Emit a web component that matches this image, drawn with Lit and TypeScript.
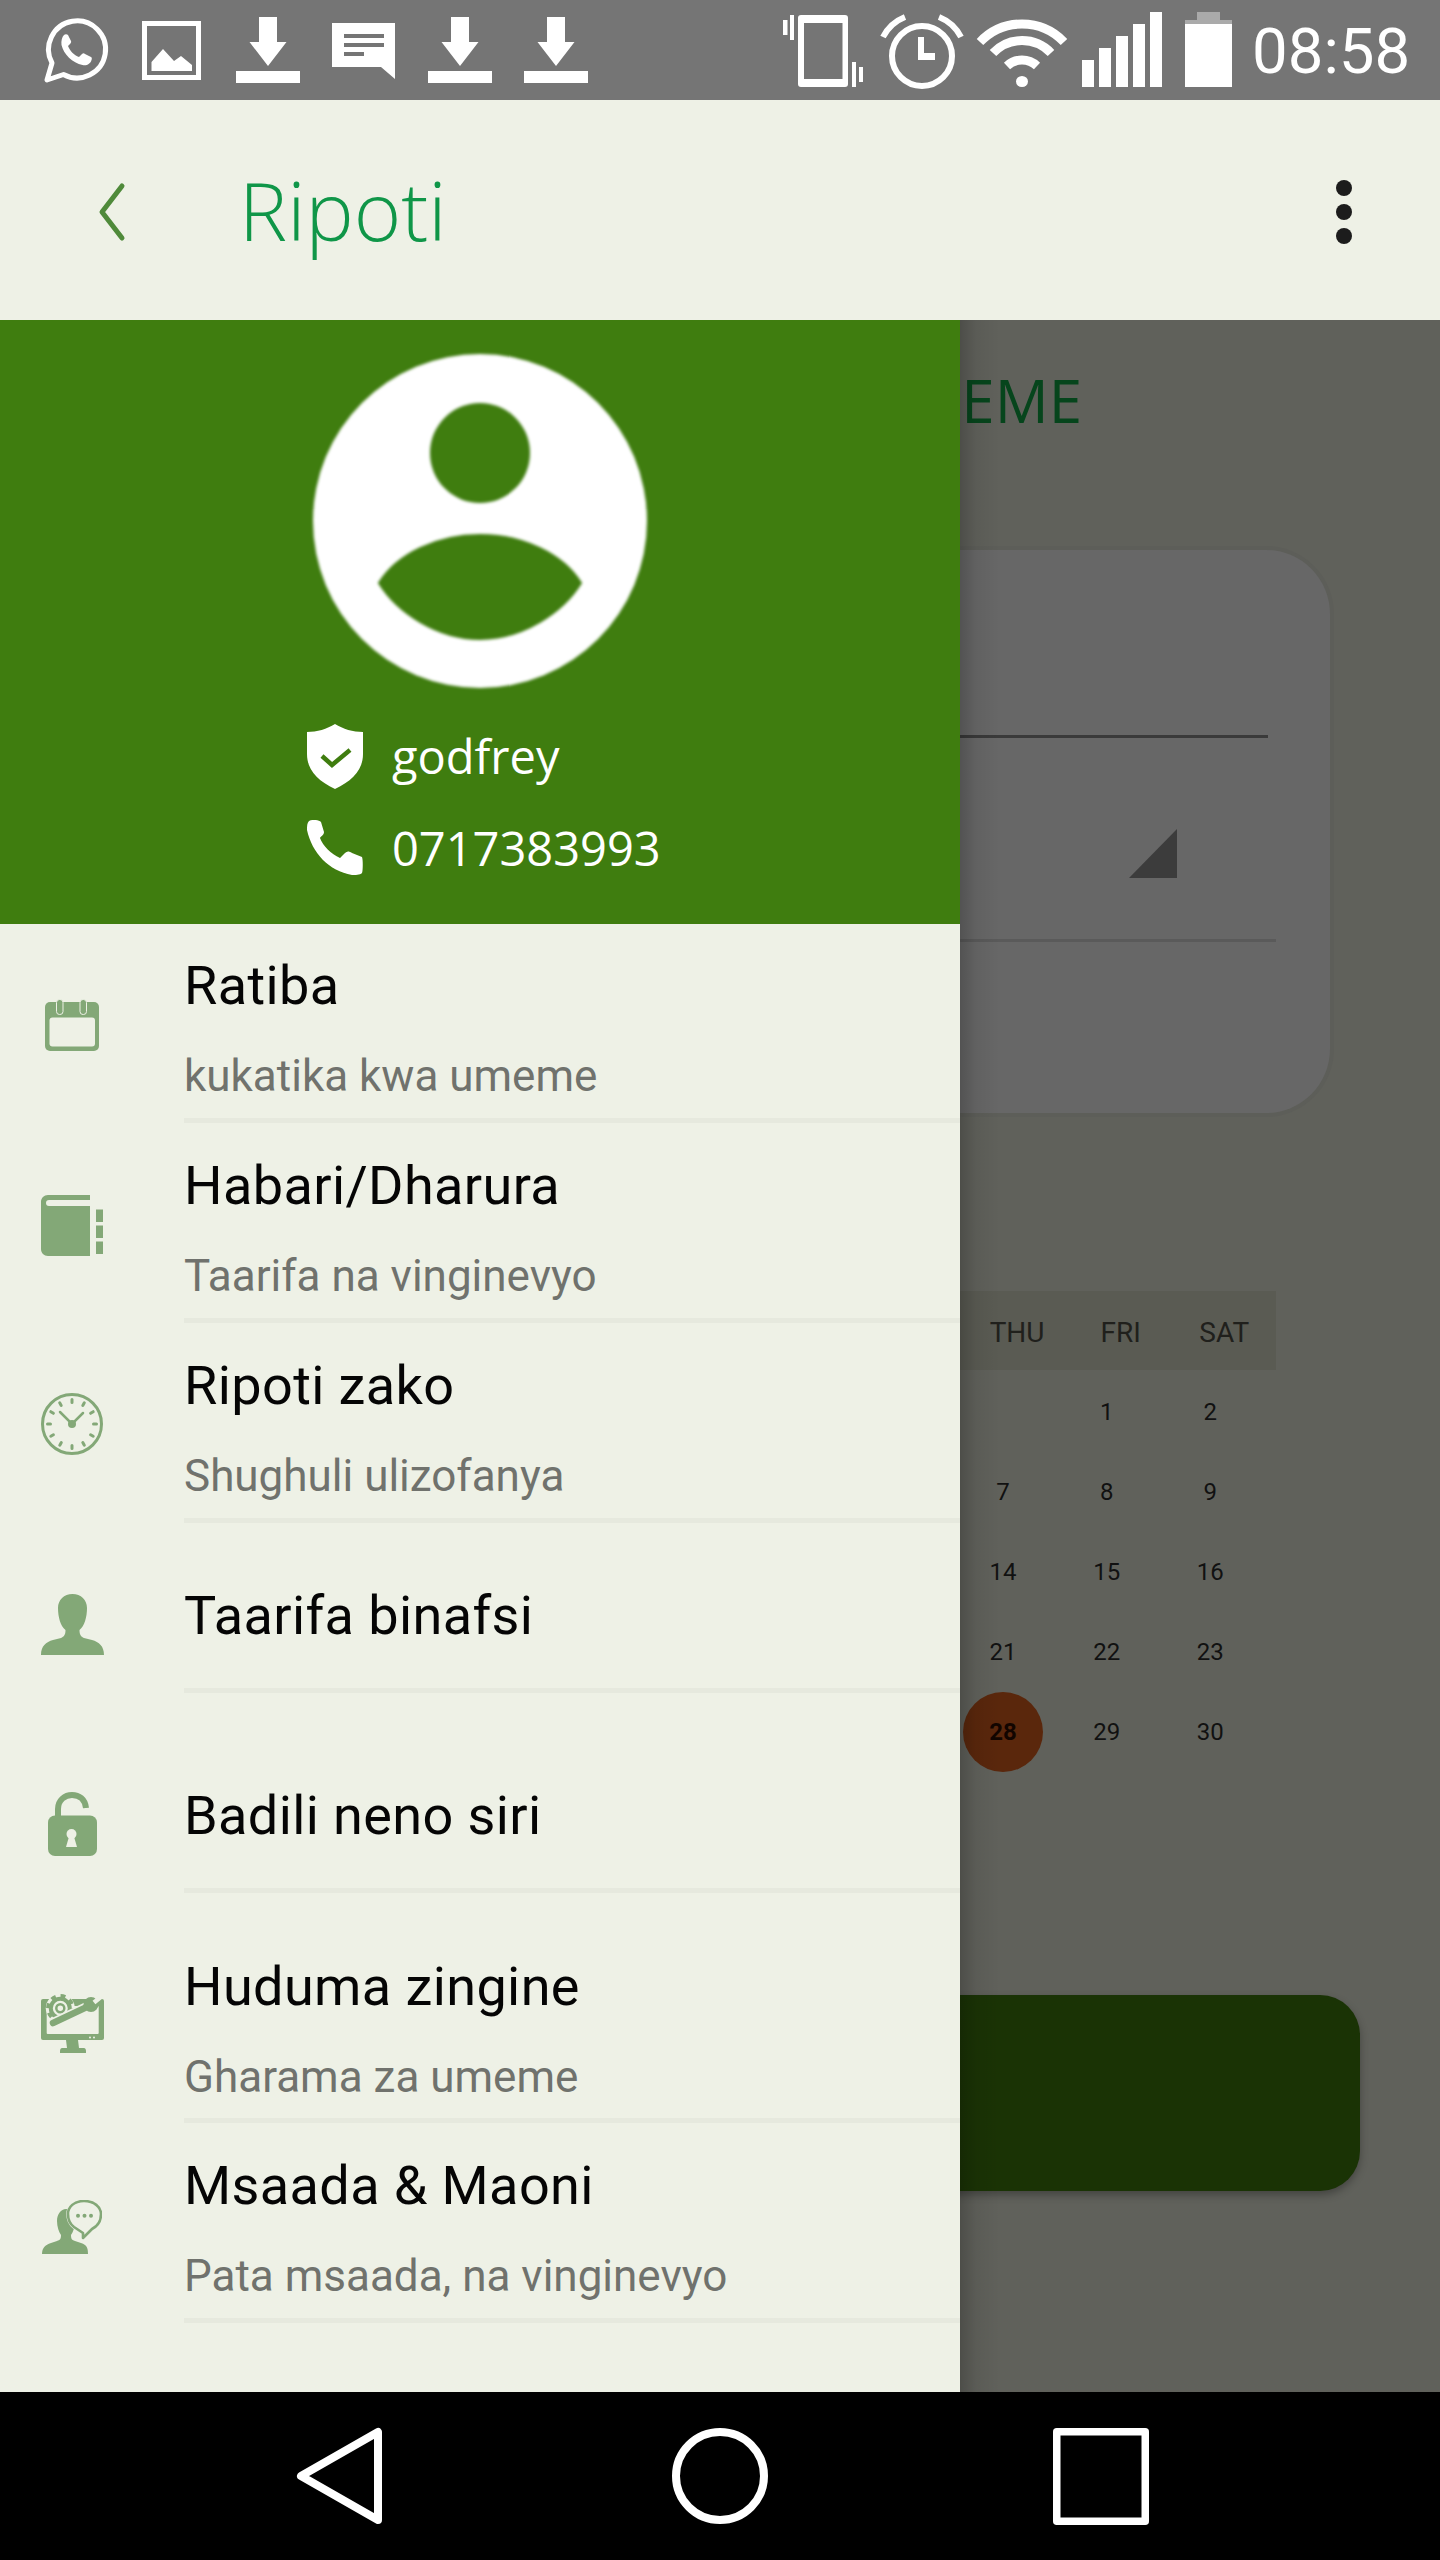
import { LitElement, css, html } from "lit";
import { customElement } from "lit/decorators.js";

const BG = "#eef1e6";

const download = html`<svg width="96" height="100" viewBox="-8 0 96 100" fill="#fff">
  <path d="M31 17h18v25h9.500L40 66 21.500 42H31z" /><rect x="8" y="71" width="64" height="12" />
</svg>`;

const statusLeft = [
  html`<svg width="96" height="100" viewBox="-16 -18 96 100">
    <path d="M3 62 8 45A28.500 28.500 0 1 1 19.500 56.500Z" fill="none" stroke="#fff" stroke-width="5" stroke-linejoin="round" />
    <path fill="#fff" d="M20 17c1-1 3-1 4 0l3 6c.4 1 0 2-1 3l-2 2c2 5 6 9 11 11l3-3c1-1 2-1 3 0l6 3c1 .5 1 2 .5 3-1 4-5 6-9 5-10-2-19-11-21-20-.5-4 .5-8 2.500-10z" />
  </svg>`,
  html`<svg width="96" height="100" viewBox="124 0 96 100" fill="#fff">
    <path fill-rule="evenodd" d="M142 21h59v59h-59zM147 26v49h49V26z" />
    <path d="M151.500 71V62L163 49l11 12 7-5 11 9v6z" />
  </svg>`,
  download,
  html`<svg width="96" height="100" viewBox="316 0 96 100">
    <path fill="#fff" d="M332 23h63v56L381 67h-49z" />
    <path fill="#757575" d="M344 34h40v4h-40zM344 43h40v4h-40zM344 52h20v4h-20z" />
  </svg>`,
  download,
  download,
];

const clockTicks = Array.from({ length: 12 }, (_, i) => {
  const a = (i * Math.PI) / 6;
  const p = (r: number) => `${(31 + r * Math.sin(a)).toFixed(1)} ${(31 - r * Math.cos(a)).toFixed(1)}`;
  return `M${p(21.5)}L${p(24.5)}`;
}).join("");

const items = [
  {
    title: "Ratiba", sub: "kukatika kwa umeme", height: 196, titleY: 59, iconY: 98,
    icon: html`<svg width="54" height="52" viewBox="0 0 54 52">
      <rect y="3" width="54" height="49" rx="5" fill="#83a877" />
      <rect x="4.500" y="18.500" width="45.500" height="29" rx="3" fill="${BG}" />
      <rect x="11.500" y=".5" width="6.500" height="15" rx="3" fill="#83a877" stroke="${BG}" />
      <rect x="35" y=".5" width="6.500" height="15" rx="3" fill="#83a877" stroke="${BG}" />
    </svg>`,
  },
  {
    title: "Habari/Dharura", sub: "Taarifa na vinginevyo", height: 200, titleY: 63, iconY: 102,
    icon: html`<svg width="62" height="61" viewBox="0 0 62 61" fill="#83a877">
      <path d="M7 0h42v5H8c-2 0-3 1-3 3s1 3 3 3h41v50H7c-4 0-7-3-7-7V7c0-4 3-7 7-7z" />
      <path d="M55 14.500h7V27h-7zM55 30.500h7V43h-7zM55 46.500h7V59h-7z" />
    </svg>`,
  },
  {
    title: "Ripoti zako", sub: "Shughuli ulizofanya", height: 200, titleY: 63, iconY: 101,
    icon: html`<svg width="62" height="62" viewBox="0 0 62 62" fill="none" stroke="#83a877">
      <circle cx="31" cy="31" r="29.500" stroke-width="3" />
      <path d="${clockTicks}" stroke-width="3" stroke-linecap="round" />
      <path d="M19 19 31 31 42 20" stroke-width="2.500" stroke-linecap="round" />
      <circle cx="31" cy="31" r="4" fill="#83a877" stroke="none" />
    </svg>`,
  },
  {
    title: "Taarifa binafsi", sub: "", height: 170, titleY: 93, iconY: 101,
    icon: html`<svg width="63" height="61" viewBox="0 0 63 61" fill="#83a877">
      <path d="M0 61c0-9 5-13 12-15l8-2c3-1.500 4.500-3 4.500-8-5-4-7.500-13-7.500-22C17 6 23 0 31.500 0S46 6 46 14c0 9-2.500 18-7.500 22 0 5 1.500 6.500 4.500 8l8 2c7 2 12 6 12 15z" />
    </svg>`,
  },
  {
    title: "Badili neno siri", sub: "", height: 200, titleY: 123, iconY: 131,
    icon: html`<svg width="49" height="64" viewBox="0 0 49 64">
      <path d="M10 26V17C10 8 17 3 24 3s13 4 14 13" fill="none" stroke="#83a877" stroke-width="6" />
      <rect y="23.500" width="49" height="40.500" rx="7" fill="#83a877" />
      <circle cx="23.500" cy="42" r="5" fill="${BG}" />
      <path d="M21.500 43h4l3.500 12H18z" fill="${BG}" />
    </svg>`,
  },
  {
    title: "Huduma zingine", sub: "Gharama za umeme", height: 230, titleY: 94, iconY: 130,
    icon: html`<svg width="63" height="59" viewBox="0 0 63 59">
      <rect y="5" width="63" height="41" rx="2" fill="#83a877" />
      <rect x="5.700" y="12" width="52" height="28" rx="1" fill="${BG}" />
      <path d="M25 46h12l1 8h5c1 0 2 1 2 3v2H19v-2c0-2 1-3 2-3h5z" fill="#83a877" />
      <circle cx="19.300" cy="14.300" r="14.500" fill="${BG}" />
      <circle cx="19.300" cy="14.300" r="12.500" fill="none" stroke="#83a877" stroke-width="3.500" stroke-dasharray="4.900 4.900" />
      <circle cx="19.300" cy="14.300" r="9.500" fill="none" stroke="#83a877" stroke-width="4" />
      <circle cx="19.300" cy="14.300" r="4" fill="none" stroke="#83a877" stroke-width="2.500" />
      <path d="M12 29 50 11" stroke="${BG}" stroke-width="10" />
      <path d="M12 29 48 12" stroke="#83a877" stroke-width="6.500" stroke-linecap="round" />
      <circle cx="50" cy="10.500" r="7.500" fill="#83a877" />
      <path d="M53 8.500 61 2" stroke="${BG}" stroke-width="4.500" />
      <circle cx="49" cy="43.500" r="1" fill="${BG}" /><circle cx="53" cy="43.500" r="1" fill="${BG}" />
    </svg>`,
  },
  {
    title: "Msaada & Maoni", sub: "Pata msaada, na vinginevyo", height: 200, titleY: 63, iconY: 104,
    icon: html`<svg width="60" height="55" viewBox="0 0 60 55">
      <path fill="#83a877" d="M0 54c0-6 3-9 9-11l6-2c3-1 4-2 4-6-2-3-4-8-4-14C15 14 19 9 24 9s9 5 9 12c0 6-2 11-4 14 0 4 1 5 4 6l6 2c6 2 7 5 7 11z" />
      <path fill="${BG}" stroke="${BG}" stroke-width="3.500" d="M42 1C32 1 26 7 26 14c0 6 2 10 6 13l9 6v5l9-9c6-3 9-8 9-15C59 7 52 1 42 1z" />
      <path fill="${BG}" stroke="#83a877" stroke-width="2.600" stroke-linejoin="round" d="M42 1C32 1 26 7 26 14c0 6 2 10 6 13l9 6v5l9-9c6-3 9-8 9-15C59 7 52 1 42 1z" />
      <circle cx="36" cy="15.700" r="2" fill="#83a877" /><circle cx="42.500" cy="15.700" r="2" fill="#83a877" /><circle cx="49" cy="15.700" r="2" fill="#83a877" />
    </svg>`,
  },
];

const weekDays = ["SUN", "MON", "TUE", "WED", "THU", "FRI", "SAT"];
const monthCells = [0, 0, 0, 0, 0, ...Array.from({ length: 30 }, (_, i) => i + 1)];

@customElement("app-root")
export class AppRoot extends LitElement {
  static styles = css`
    :host {
      display: block;
      width: 1440px;
      height: 2560px;
      overflow: hidden;
      font-family: "Roboto", "Liberation Sans", sans-serif;
    }
    .screen {
      display: flex;
      flex-direction: column;
      height: 100%;
    }
    svg {
      display: block;
      flex: none;
    }

    .status {
      display: flex;
      align-items: center;
      height: 100px;
      flex: none;
      padding-left: 28px;
      background: #757575;
    }
    .status-right {
      display: flex;
      align-items: center;
      margin-left: auto;
    }
    .time {
      width: 197px;
      padding-left: 9px;
      box-sizing: border-box;
      color: #fff;
      font-size: 63.5px;
      font-weight: 400;
      line-height: 100px;
      position: relative;
      top: 2px;
    }

    .appbar {
      display: flex;
      align-items: center;
      height: 220px;
      flex: none;
      padding: 0 88px 0 90px;
      background: #eef1e6;
    }
    .appbar h1 {
      margin: 0 0 0 109px;
      color: #0f9648;
      font-family: "Open Sans", "Liberation Sans", sans-serif;
      font-size: 81px;
      font-weight: 300;
      line-height: 110px;
    }
    .dots {
      display: flex;
      flex-direction: column;
      gap: 8px;
      margin: 4px 0 0 auto;
    }
    .dots i {
      width: 16px;
      height: 16px;
      border-radius: 50%;
      background: #1c1c1c;
    }

    .content {
      flex: 1;
      position: relative;
      overflow: hidden;
      background: #60615b;
    }

    .page {
      display: flex;
      flex-direction: column;
      padding-top: 50px;
    }
    .page h2 {
      margin: 0;
      padding-right: 358px;
      text-align: right;
      color: #06451c;
      font-family: "Open Sans", "Liberation Sans", sans-serif;
      font-size: 60px;
      font-weight: 400;
      line-height: 60px;
    }
    .card {
      display: flex;
      flex-direction: column;
      height: 563px;
      margin: 120px 110px 0;
      padding-top: 185px;
      box-sizing: border-box;
      border-radius: 64px;
      background: #676767;
      box-shadow: 0 0 0 4px #5d5e59;
    }
    .field-line {
      height: 3px;
      margin: 0 62px;
      background: #3a3a3a;
    }
    .select {
      align-self: flex-end;
      margin: 91px 153px 61px 0;
      width: 48px;
      height: 49px;
      background: #3c3c3c;
      clip-path: polygon(100% 0, 100% 100%, 0 100%);
    }
    .field-line.soft {
      margin: 0 54px;
      background: #5a5a5a;
    }

    .calendar {
      align-self: flex-end;
      width: 725px;
      margin: 178px 164px 0 0;
    }
    .week {
      display: grid;
      grid-template-columns: repeat(7, 1fr);
      height: 79px;
      box-sizing: border-box;
      padding-top: 3px;
      align-items: center;
      background: #5a5b53;
      color: #20201c;
      font-size: 28px;
      text-align: center;
    }
    .days {
      display: grid;
      grid-template-columns: repeat(7, 1fr);
      grid-auto-rows: 80px;
      margin: 2px 14px 0 -14px;
      color: #111;
      font-size: 24px;
    }
    .days span {
      display: flex;
      align-items: center;
      justify-content: center;
    }
    .days .today {
      justify-self: center;
      width: 80px;
      border-radius: 50%;
      background: #5a270c;
      color: #120500;
      font-weight: 700;
    }

    .action {
      height: 196px;
      margin: 223px 80px 0;
      border-radius: 40px;
      background: #1a3305;
      box-shadow: 0 4px 8px rgba(0, 0, 0, 0.3);
    }

    .drawer {
      position: absolute;
      top: 0;
      bottom: 0;
      left: 0;
      width: 960px;
      background: #eef1e6;
    }
    .edge {
      position: absolute;
      top: 0;
      bottom: 0;
      left: 960px;
      width: 40px;
      background: linear-gradient(to right, rgba(0, 0, 0, 0.2), rgba(0, 0, 0, 0.06) 40%, rgba(0, 0, 0, 0));
    }
    .profile {
      display: flex;
      flex-direction: column;
      height: 604px;
      padding-top: 34px;
      box-sizing: border-box;
      background: #3f7d0f;
      color: #fff;
      font-family: "Open Sans", "Liberation Sans", sans-serif;
      font-size: 47px;
    }
    .avatar {
      align-self: center;
      margin-bottom: 22px;
      filter: blur(1.5px);
    }
    .who {
      display: flex;
      align-items: center;
      gap: 29px;
      height: 92px;
      padding-left: 307px;
    }
    .who svg {
      filter: blur(0.5px);
    }

    .menu {
      padding-top: 3px;
    }
    .row {
      display: flex;
      box-sizing: border-box;
    }
    .icon-cell {
      display: flex;
      align-items: center;
      align-self: flex-start;
      justify-content: center;
      width: 144px;
      margin-right: 40px;
      flex: none;
    }
    .row-text {
      flex: 1;
      box-sizing: border-box;
      border-bottom: 5px solid #e6e9de;
    }
    .row-text b {
      display: block;
      color: #050505;
      font-size: 54px;
      font-weight: 400;
      letter-spacing: 0.4px;
      line-height: 60px;
    }
    .row-text small {
      display: block;
      margin-top: 30px;
      color: #70726d;
      font-size: 44px;
      line-height: 60px;
    }

    .navbar {
      display: flex;
      align-items: center;
      justify-content: center;
      gap: 285px;
      height: 168px;
      flex: none;
      background: #000;
    }
  `;

  render() {
    return html`
      <div class="screen">
        <div class="status">
          ${statusLeft}
          <div class="status-right">
            <svg width="97" height="100" viewBox="775 0 97 100" fill="#fff">
              <path fill-rule="evenodd" d="M801 15h44a3 3 0 0 1 3 3v66a3 3 0 0 1-3 3h-44a3 3 0 0 1-3-3V18a3 3 0 0 1 3-3zM804 23v56h38.500V23z" />
              <path d="M783 20h4.500v15H783zM790 15h4v25h-4zM852 62h4v25h-4zM859 67h4v15h-4z" />
            </svg>
            <svg width="100" height="100" viewBox="872 0 100 100" fill="none" stroke="#fff">
              <circle cx="922" cy="56" r="30" stroke-width="6" />
              <path d="M883 37A42.500 42.500 0 0 1 905 17M939 17A42.500 42.500 0 0 1 961 37" stroke-width="6" />
              <path d="M918 37h6v16h11v7h-17z" fill="#fff" stroke="none" />
            </svg>
            <svg width="102" height="100" viewBox="972 0 102 100" fill="none" stroke="#fff" stroke-width="9">
              <path d="M980 42A58 58 0 0 1 1064 42M993 53A40 40 0 0 1 1051 53M1007 66A22 22 0 0 1 1037 66" />
              <ellipse cx="1022" cy="81.500" rx="6" ry="5.500" fill="#fff" stroke="none" />
            </svg>
            <svg width="100" height="100" viewBox="1074 0 100 100" fill="#fff">
              <path d="M1082 60h12v27h-12zM1099 48h12v39h-12zM1116 36h12v51h-12zM1133 24h12v63h-12zM1150 12h12v75h-12z" />
            </svg>
            <svg width="69" height="100" viewBox="1174 0 69 100">
              <path d="M1197 12h23v8h12v4h-47v-4h12z" fill="#aaa" />
              <rect x="1185" y="24" width="47" height="63" fill="#fff" />
            </svg>
            <span class="time">08:58</span>
          </div>
        </div>

        <div class="appbar">
          <svg width="40" height="70" viewBox="90 175 40 70" fill="none" stroke="#4f8a3a" stroke-width="5" stroke-linecap="round" stroke-linejoin="round">
            <path d="M122 186 102 212 122 238" />
          </svg>
          <h1>Ripoti</h1>
          <div class="dots"><i></i><i></i><i></i></div>
        </div>

        <div class="content">
          <div class="page">
            <h2>UMEME</h2>
            <div class="card">
              <div class="field-line"></div>
              <div class="select"></div>
              <div class="field-line soft"></div>
            </div>
            <div class="calendar">
              <div class="week">${weekDays.map((d) => html`<div>${d}</div>`)}</div>
              <div class="days">
                ${monthCells.map((d) => html`<span class=${d === 28 ? "today" : ""}>${d || ""}</span>`)}
              </div>
            </div>
            <div class="action"></div>
          </div>

          <div class="edge"></div>
          <div class="drawer">
            <div class="profile">
              <svg class="avatar" width="334" height="334" viewBox="0 0 334 334">
                <circle cx="167" cy="167" r="167" fill="#fff" />
                <circle cx="167" cy="99" r="50" fill="#3f7d0f" />
                <path d="M66 229C84 200 124 181 167 181S250 200 268 229C250 258 210 285 167 285S84 258 66 229Z" fill="#3f7d0f" stroke="#3f7d0f" stroke-width="2" stroke-linejoin="round" />
              </svg>
              <div class="who">
                <svg width="56" height="65" viewBox="0 0 56 65">
                  <path d="M28 0C36 5 46 8 56 8v22c0 16-11 27-28 35C11 57 0 46 0 30V8C10 8 20 5 28 0z" fill="#fff" />
                  <path d="M15 32 25 41 43 26" fill="none" stroke="#3f7d0f" stroke-width="4.500" />
                </svg>
                <span>godfrey</span>
              </div>
              <div class="who">
                <svg width="56" height="56" viewBox="0 0 56 56">
                  <path fill="#fff" d="M2 1C6-1 12 0 14 2L17 12C17 15 14 16 13 18 16 26 24 34 33 38L38 33C40 31 42 31 45 33L55 37C56 39 56 50 55 53 53 55 48 55 45 55 22 51 5 33 0 10 0 6 0 3 2 1Z" />
                </svg>
                <span>0717383993</span>
              </div>
            </div>
            <div class="menu">
              ${items.map(
                (item) => html`
                  <div class="row" style="height:${item.height}px">
                    <div class="icon-cell" style="height:${item.iconY * 2}px">${item.icon}</div>
                    <div class="row-text" style="padding-top:${item.titleY - 30}px">
                      <b>${item.title}</b>
                      ${item.sub ? html`<small>${item.sub}</small>` : ""}
                    </div>
                  </div>
                `
              )}
            </div>
          </div>
        </div>

        <div class="navbar">
          <svg width="96" height="100" viewBox="291 2426 96 100" fill="none" stroke="#fff" stroke-width="8" stroke-linejoin="round">
            <path d="M378 2432V2520L301 2476Z" />
          </svg>
          <svg width="96" height="96" viewBox="672 2428 96 96" fill="none" stroke="#fff" stroke-width="8">
            <circle cx="720" cy="2476" r="44" />
          </svg>
          <svg width="96" height="97" viewBox="1053 2427 96 97" fill="none" stroke="#fff" stroke-width="7.500" stroke-linejoin="round">
            <rect x="1056.750" y="2430.750" width="88.500" height="89.500" />
          </svg>
        </div>
      </div>
    `;
  }
}
